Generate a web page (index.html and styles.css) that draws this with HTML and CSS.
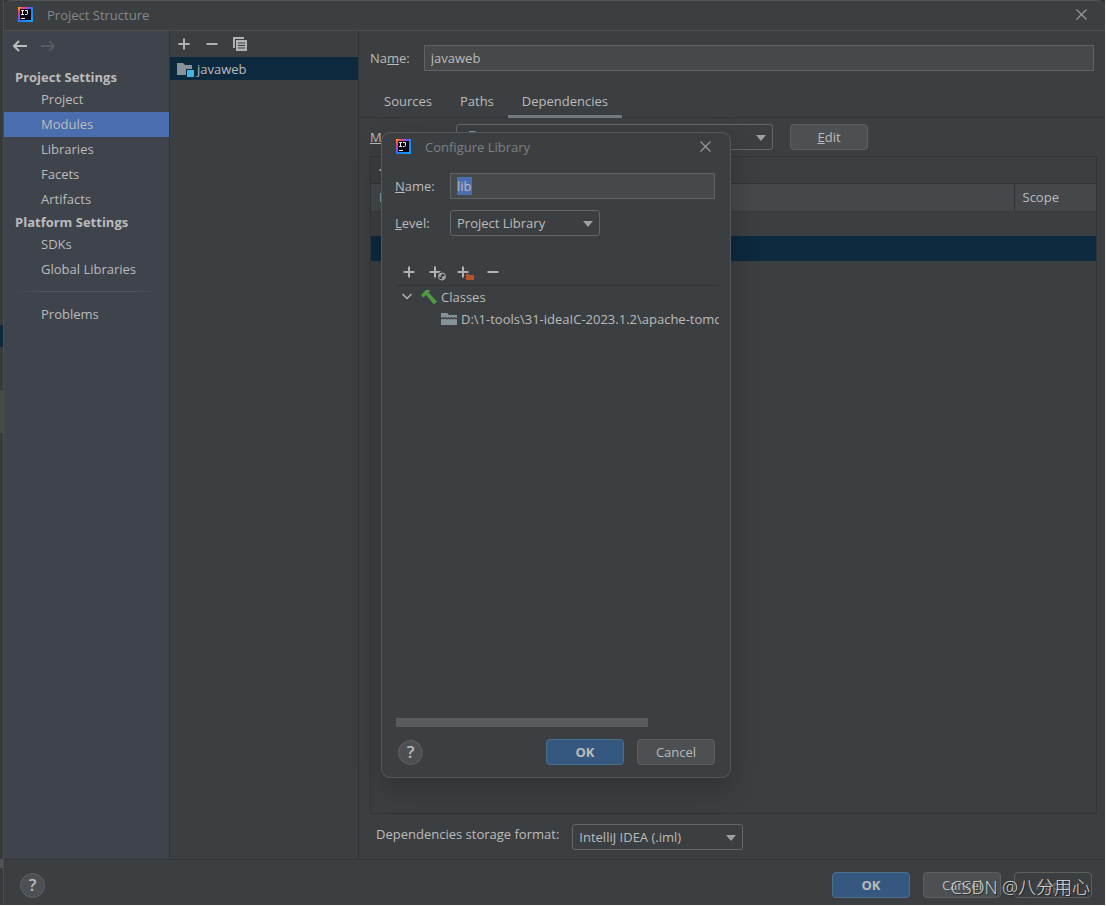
FILE: index.html
```html
<!DOCTYPE html>
<html lang="en">
<head>
    <meta charset="UTF-8">
    <meta name="viewport" content="width=device-width, initial-scale=1.0">
    <title>Project Structure</title>
    <link rel="stylesheet" href="styles.css">
</head>
<body>
    <!-- shared icons -->
    <svg class="defs" width="0" height="0" aria-hidden="true">
        <defs>
            <linearGradient id="ijFrame" x1="0" y1="0" x2="1" y2="1">
                <stop offset="0" stop-color="#fdb60d"/>
                <stop offset="0.18" stop-color="#f7406b"/>
                <stop offset="0.38" stop-color="#7a52f0"/>
                <stop offset="0.55" stop-color="#1e80f5"/>
                <stop offset="1" stop-color="#14a0ff"/>
            </linearGradient>
            <symbol id="logo" viewBox="0 0 16 16">
                <rect width="15" height="15" fill="url(#ijFrame)"/>
                <rect x="2" y="2" width="11" height="11" fill="#0b0510"/>
                <path d="M3 3.500h3M4.500 3.500v4M3 7.500h3M7 3.500h2.500v3q0 1-1 1H7M3 11.500h4" stroke="#e8e8ec" stroke-width="1" fill="none"/>
            </symbol>
            <symbol id="plus" viewBox="0 0 16 16">
                <path d="M8 2.5v11M2.5 8h11" stroke="#afb1b3" stroke-width="2" fill="none"/>
            </symbol>
            <symbol id="minus" viewBox="0 0 16 16">
                <path d="M2.5 8h11" stroke="#afb1b3" stroke-width="2" fill="none"/>
            </symbol>
            <symbol id="close" viewBox="0 0 16 16">
                <path d="M2.500 2.500l10 10M12.500 2.500l-10 10" stroke="#9a9c9e" stroke-width="1.1" fill="none"/>
            </symbol>
        </defs>
    </svg>

    <div class="desktop">
        <div class="editor-edge">
            <span class="edge-row"></span>
            <span class="edge-green"></span>
            <span class="edge-bar"></span>
        </div>

        <div class="window">
            <header class="titlebar">
                <svg class="icon"><use href="#logo"/></svg>
                <h1>Project Structure</h1>
                <button class="close" aria-label="Close"><svg class="icon"><use href="#close"/></svg></button>
            </header>

            <div class="content">
                <nav class="sidebar">
                    <div class="history">
                        <button aria-label="Back"><svg class="icon" viewBox="0 0 16 16"><path d="M15 8H2M7 3L2 8l5 5" stroke="#bbbdbf" stroke-width="2" fill="none"/></svg></button>
                        <button aria-label="Forward" disabled><svg class="icon" viewBox="0 0 16 16"><path d="M1 8h13M9 3l5 5-5 5" stroke="#595b60" stroke-width="1.8" fill="none"/></svg></button>
                    </div>
                    <h2>Project Settings</h2>
                    <a href="#">Project</a>
                    <a href="#" class="active">Modules</a>
                    <a href="#">Libraries</a>
                    <a href="#">Facets</a>
                    <a href="#">Artifacts</a>
                    <h2>Platform Settings</h2>
                    <a href="#">SDKs</a>
                    <a href="#">Global Libraries</a>
                    <hr>
                    <a href="#">Problems</a>
                </nav>

                <section class="modules">
                    <div class="toolbar">
                        <button aria-label="Add"><svg class="icon"><use href="#plus"/></svg></button>
                        <button aria-label="Remove"><svg class="icon"><use href="#minus"/></svg></button>
                        <button aria-label="Copy">
                            <svg class="icon" viewBox="0 0 16 16">
                                <path d="M1 1h11v2H3v9H1z" fill="#afb1b3"/>
                                <path fill-rule="evenodd" d="M4 4h11v11H4zM6 6.5v1h7v-1zM6 9v1h7V9zM6 11.5v1h7v-1z" fill="#afb1b3"/>
                            </svg>
                        </button>
                    </div>
                    <div class="module-row">
                        <svg class="module-icon" viewBox="0 0 18 16">
                            <path d="M1 2h6l2 2h7v10H1z" fill="#87939a"/>
                            <path d="M10 8h8v8h-8z" fill="#0d293e"/>
                            <path d="M11 9h7v7h-7z" fill="#40b6e0"/>
                        </svg>
                        <span>javaweb</span>
                    </div>
                </section>

                <main class="details">
                    <div class="name-row">
                        <label for="moduleName">Na<u>m</u>e:</label>
                        <input type="text" id="moduleName" value="javaweb">
                    </div>
                    <div class="tabs" role="tablist">
                        <button role="tab">Sources</button>
                        <button role="tab">Paths</button>
                        <button role="tab" class="active" aria-selected="true">Dependencies</button>
                    </div>
                    <div class="sdk-row">
                        <label for="sdk"><u>M</u>odule SDK:</label>
                        <div class="combo">
                            <svg class="icon combo-icon" viewBox="0 0 16 16"><path d="M1 2h6l2 2h6v10H1z" fill="#87939a"/></svg>
                            <select id="sdk"><option>Project SDK 17</option></select>
                        </div>
                        <button class="btn"><span><u>E</u>dit</span></button>
                    </div>
                    <div class="deps">
                        <div class="deps-toolbar">
                            <button aria-label="Add dependency"><svg class="icon"><use href="#plus"/></svg></button>
                        </div>
                        <table>
                            <thead>
                                <tr><th>Export</th><th class="scope">Scope</th></tr>
                            </thead>
                            <tbody>
                                <tr><td></td><td></td></tr>
                                <tr class="selected"><td></td><td></td></tr>
                            </tbody>
                        </table>
                    </div>
                    <div class="storage-row">
                        <label for="storage">Dependencies storage format:</label>
                        <div class="combo">
                            <select id="storage"><option>IntelliJ IDEA (.iml)</option></select>
                        </div>
                    </div>
                </main>
            </div>

            <footer class="footer">
                <button class="help" aria-label="Help">?</button>
                <button class="btn primary">OK</button>
                <button class="btn">Cancel</button>
                <button class="btn" disabled>Apply</button>
            </footer>
        </div>

        <div class="dialog" role="dialog" aria-labelledby="dialogTitle">
            <header class="dialog-title">
                <svg class="icon"><use href="#logo"/></svg>
                <h2 id="dialogTitle">Configure Library</h2>
                <button class="close" aria-label="Close"><svg class="icon"><use href="#close"/></svg></button>
            </header>
            <div class="form">
                <label for="libName"><u>N</u>ame:</label>
                <input type="text" id="libName" value="lib">
                <label for="level"><u>L</u>evel:</label>
                <div class="combo level">
                    <select id="level"><option>Project Library</option></select>
                </div>
            </div>
            <div class="toolbar">
                <button aria-label="Add"><svg class="icon"><use href="#plus"/></svg></button>
                <button aria-label="Specify documentation URL">
                    <svg class="icon" viewBox="0 0 16 16">
                        <path d="M6 2.5v11M.5 8h11" stroke="#afb1b3" stroke-width="2"/>
                        <circle cx="13" cy="12.500" r="4.800" fill="#3c3f41"/>
                        <circle cx="13" cy="12.500" r="3.500" fill="none" stroke="#afb1b3"/>
                        <path d="M10 10.500l2-1.500 1 1.500-1.500 1 .5 1.500-2-.5zM13 12.500l3-.5-.5 2-2 2z" fill="#afb1b3"/>
                    </svg>
                </button>
                <button aria-label="Exclude">
                    <svg class="icon" viewBox="0 0 16 16">
                        <path d="M6 2.5v11M.5 8h11" stroke="#afb1b3" stroke-width="2"/>
                        <path d="M8 9h9v8H8z" fill="#3c3f41"/>
                        <path d="M9 10h3l1 1h4v5H9z" fill="#b3562b"/>
                    </svg>
                </button>
                <button aria-label="Remove"><svg class="icon"><use href="#minus"/></svg></button>
            </div>
            <div class="tree">
                <div class="tree-row">
                    <svg class="icon" viewBox="0 0 16 16"><path d="M3.5 5L8 9.500 12.500 5" stroke="#afb1b3" stroke-width="1.5" fill="none"/></svg>
                    <svg class="icon hammer" viewBox="0 0 16 16">
                        <path d="M0 6l5-5h4.500L7.500 3.500 16 12.500 13 15.500 5 6 2.500 8.500z" fill="#4f9a41"/>
                    </svg>
                    <span>Classes</span>
                </div>
                <div class="tree-row child">
                    <svg class="icon" viewBox="0 0 16 16">
                        <path d="M0 2h6l2 2h8v10H0z" fill="#87939a"/>
                        <path d="M0 8l1.500-1.500L3 8l1.500-1.500L6 8l1.500-1.500L9 8l1.500-1.500L12 8l1.500-1.500L15 8l1-1" stroke="#3c3f41" stroke-width="1.200" fill="none"/>
                    </svg>
                    <span>D:\1-tools\31-ideaIC-2023.1.2\apache-tomcat-10.1.9\lib</span>
                </div>
            </div>
            <div class="scrollbar"></div>
            <footer class="dialog-footer">
                <button class="help" aria-label="Help">?</button>
                <button class="btn primary">OK</button>
                <button class="btn">Cancel</button>
            </footer>
        </div>

        <div class="watermark">CSDN @八分用心</div>
    </div>

    <script>
        const libName = document.getElementById('libName');
        libName.focus();
        libName.select();
    </script>
</body>
</html>
```

FILE: styles.css
```css
* {
    box-sizing: border-box;
}
body {
    margin: 0;
    padding: 0 1px 1px 0;
    height: 100vh;
    background-color: #fff;
    color: #bbbbbb;
    font-family: "Open Sans", "Noto Sans", "Noto Sans CJK SC", sans-serif;
    font-size: 13px;
    line-height: 18px;
}
h1, h2 {
    margin: 0;
    font-size: 13px;
    font-weight: normal;
}
button, input, select {
    font: inherit;
    color: inherit;
    margin: 0;
    outline: none;
}
button {
    display: flex;
    align-items: center;
    justify-content: center;
    padding: 0;
    border: none;
    background: none;
}
.defs {
    position: absolute;
}
.icon {
    display: block;
    flex: none;
    width: 16px;
    height: 16px;
    overflow: visible;
}
.desktop {
    position: relative;
    display: flex;
    height: 100%;
    background-color: #333537;
    overflow: hidden;
}

/* editor visible behind the window */
.editor-edge {
    display: flex;
    flex-direction: column;
    width: 4px;
    padding-top: 325px;
    background-color: #383a3b;
    border-right: 1px solid #4a4c4e;
}
.edge-row {
    height: 22px;
    background-color: #0d293e;
}
.edge-green {
    height: 43px;
    margin-top: 43px;
    background-color: #444d42;
}
.edge-bar {
    height: 9px;
    margin-top: 426px;
    background-color: #515355;
}

.window {
    flex: 1;
    min-width: 0;
    display: flex;
    flex-direction: column;
    background-color: #3c3f41;
    border-top: 1px solid #505355;
    border-radius: 8px 8px 0 0;
}
.titlebar {
    display: flex;
    align-items: center;
    height: 30px;
    padding: 0 15px 2px 14px;
    border-bottom: 1px solid #504c4b;
    color: #85878a;
}
.titlebar h1 {
    margin-left: 13px;
}
.close {
    margin-left: auto;
}
.content {
    flex: 1;
    display: flex;
    min-height: 0;
}

.sidebar {
    width: 166px;
    background-color: #3f434c;
    border-right: 1px solid #323435;
}
.history {
    display: flex;
    gap: 12px;
    height: 36px;
    padding: 0 8px 6px;
}
.sidebar h2 {
    padding-left: 11px;
    font-weight: bold;
    line-height: 20px;
}
.sidebar a {
    display: block;
    padding-left: 37px;
    color: inherit;
    line-height: 25px;
    text-decoration: none;
}
.sidebar a.active {
    background-color: #4b6eaf;
}
.sidebar hr {
    height: 1px;
    margin: 9px 8px 10px;
    border: none;
    background: linear-gradient(90deg, transparent, #53565c 20%, #53565c 80%, transparent);
}

.modules {
    width: 189px;
    border-right: 1px solid #323435;
}
.toolbar {
    display: flex;
    align-items: center;
    gap: 12px;
}
.modules .toolbar {
    height: 26px;
    padding-left: 6px;
}
.module-row {
    display: flex;
    align-items: center;
    gap: 3px;
    height: 23px;
    padding-left: 6px;
    background-color: #0d293e;
}
.module-icon {
    width: 18px;
    height: 16px;
}

.details {
    flex: 1;
    min-width: 0;
    display: flex;
    flex-direction: column;
}
.name-row {
    display: flex;
    align-items: center;
    gap: 14px;
    padding: 14px 11px 0;
}
.name-row input {
    flex: 1;
}
input {
    height: 26px;
    min-width: 0;
    padding: 0 6px;
    background-color: #45494a;
    border: 1px solid #606365;
}
input::selection {
    background-color: #4b6eaf;
    color: #bbbbbb;
}
.tabs {
    display: flex;
    margin-top: 16px;
    padding-left: 11px;
    border-bottom: 1px solid #323435;
}
.tabs button {
    height: 31px;
    margin-bottom: -1px;
    padding: 0 14px;
    border-bottom: 3px solid transparent;
}
.tabs button.active {
    border-bottom-color: #747a80;
}
.sdk-row {
    display: flex;
    align-items: center;
    padding: 6px 11px;
}
.sdk-row label {
    width: 86px;
}
.sdk-row .combo {
    width: 317px;
    margin-right: 17px;
}
.sdk-row select {
    padding-left: 34px;
}
.combo {
    position: relative;
}
.combo::after {
    content: "";
    position: absolute;
    top: 11px;
    right: 7px;
    border: 5px solid transparent;
    border-top: 6px solid #9da0a2;
    border-bottom: none;
    pointer-events: none;
}
.combo-icon {
    position: absolute;
    top: 5px;
    left: 12px;
}
select {
    display: block;
    appearance: none;
    width: 100%;
    height: 26px;
    padding: 0 24px 0 6px;
    background-color: #3c3f41;
    border: 1px solid #646668;
    border-radius: 3px;
}
.btn {
    width: 78px;
    height: 26px;
    background-color: #4c5052;
    border: 1px solid #5e6060;
    border-radius: 4px;
}
.btn.primary {
    background-color: #365880;
    border-color: #4c708c;
    font-weight: bold;
}
.btn:disabled {
    background-color: transparent;
    color: #777777;
}
.deps {
    flex: 1;
    margin: 0 8px 0 11px;
    border: 1px solid #323435;
}
.deps-toolbar {
    display: flex;
    height: 27px;
    padding-left: 6px;
    border-bottom: 1px solid #323435;
}
table {
    width: 100%;
    border-collapse: collapse;
    table-layout: fixed;
}
th {
    height: 27px;
    padding: 0 8px;
    background-color: #45484a;
    border-bottom: 1px solid #393b3d;
    font-weight: normal;
    text-align: left;
}
th.scope {
    width: 82px;
    border-left: 1px solid #323435;
}
td {
    height: 25px;
    padding: 0;
}
tr.selected {
    background-color: #0d293e;
}
.storage-row {
    display: flex;
    gap: 13px;
    padding: 10px 0 9px 17px;
}
.storage-row label {
    line-height: 20px;
}
.storage-row .combo {
    width: 171px;
}

.footer {
    display: flex;
    align-items: center;
    gap: 13px;
    height: 46px;
    padding: 5px 13px 0 16px;
    border-top: 1px solid #323435;
}
.help {
    width: 25px;
    height: 25px;
    margin-right: auto;
    background-color: #4c5052;
    border: 1px solid #5e6060;
    border-radius: 50%;
    font-size: 17px;
    font-weight: 600;
}

.dialog {
    position: absolute;
    top: 132px;
    left: 381px;
    display: flex;
    flex-direction: column;
    width: 350px;
    height: 646px;
    padding: 0 15px 12px 14px;
    background-color: #3c3f41;
    border: 1px solid #55585a;
    border-radius: 9px;
    box-shadow: 0 10px 28px rgba(0, 0, 0, 0.22);
}
.dialog-title {
    display: flex;
    align-items: center;
    height: 28px;
    color: #7d7f81;
}
.dialog-title h2 {
    margin-left: 13px;
}
.dialog-title .close {
    margin-right: 1px;
}
.form {
    display: grid;
    grid-template-columns: 54px 1fr;
    row-gap: 11px;
    align-items: center;
    padding-top: 12px;
}
.form label {
    margin-left: -1px;
}
.combo.level {
    width: 150px;
}
.dialog .toolbar {
    height: 27px;
    margin: 23px -4px 0 0;
    padding-left: 5px;
    border-bottom: 1px solid #323435;
}
.tree {
    flex: 1;
    margin-right: -4px;
    overflow: hidden;
}
.tree-row {
    display: flex;
    align-items: center;
    gap: 4px;
    height: 22px;
    padding-left: 3px;
    white-space: nowrap;
}
.tree-row .hammer {
    margin-left: 2px;
}
.tree-row.child {
    padding-left: 45px;
}
.scrollbar {
    width: 252px;
    height: 9px;
    background-color: #595b5d;
}
.dialog-footer {
    display: flex;
    align-items: center;
    gap: 13px;
    margin-top: 12px;
    padding-left: 2px;
}

.watermark {
    position: absolute;
    right: 15px;
    bottom: 6px;
    color: #dcdcdc;
    font-family: "Open Sans", "Noto Sans CJK SC", sans-serif;
    font-size: 18px;
    font-weight: 300;
    line-height: 24px;
    text-shadow: 1px 1px 1px #222;
    pointer-events: none;
}
```
